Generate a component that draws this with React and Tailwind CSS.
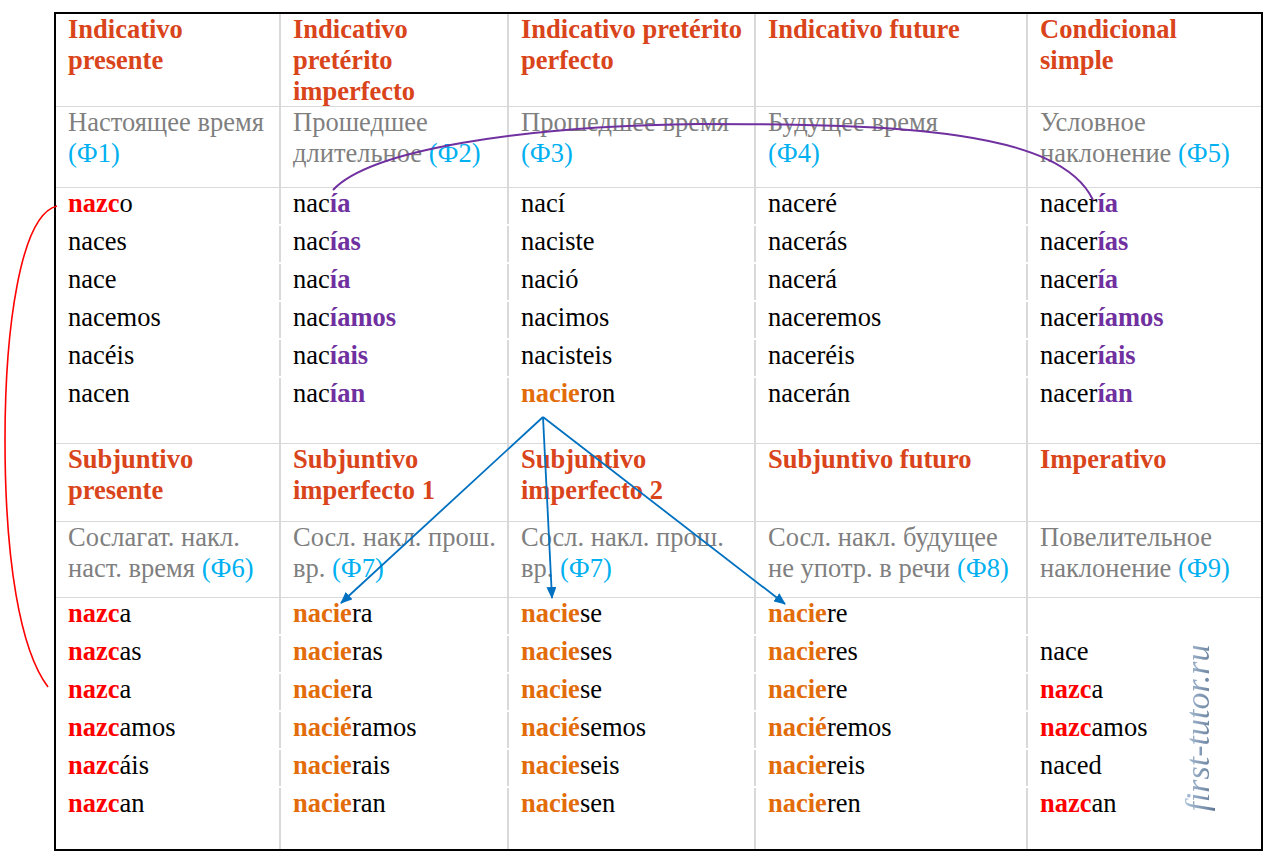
import React from 'react'

const R = ({ children }) => <b className="text-[#ff0000]">{children}</b>
const O = ({ children }) => <b className="text-[#e36c0a]">{children}</b>
const P = ({ children }) => <b className="text-[#7030a0]">{children}</b>
const F = ({ children }) => <span className="text-[#00b0f0]">{children}</span>

const cols = 'grid grid-cols-[223px_228px_247px_272px_235px]'
const line = 'border-[#d9d9d9]'

const Cell = ({ i, children }) => (
  <div className={`pl-[12px] whitespace-nowrap ${i > 0 ? `border-l-2 ${line}` : ''}`}>{children}</div>
)

const HeadRow = ({ items, h, top }) => (
  <div className={`${cols} ${h} ${top ? `border-t ${line}` : ''} font-bold text-[#d9441b]`}>
    {items.map((t, i) => <Cell key={i} i={i}>{t}</Cell>)}
  </div>
)

const SubRow = ({ items, h }) => (
  <div className={`${cols} ${h} border-t ${line} text-[#7f7f7f]`}>
    {items.map((t, i) => <Cell key={i} i={i}>{t}</Cell>)}
  </div>
)

const ConjRow = ({ data, h }) => (
  <div className={`${cols} ${h} border-t ${line}`}>
    {data.map((words, i) => (
      <div key={i} className="flex flex-col gap-[2px]">
        {words.map((w, j) => (
          <div
            key={j}
            className={`pl-[12px] whitespace-nowrap ${j === words.length - 1 ? 'flex-1' : 'h-[36px]'} ${i > 0 ? `border-l-2 ${line}` : ''}`}
          >
            {w}
          </div>
        ))}
      </div>
    ))}
  </div>
)

const conj1 = [
  [<><R>nazc</R>o</>, 'naces', 'nace', 'nacemos', 'nacéis', 'nacen'],
  [<>nac<P>ía</P></>, <>nac<P>ías</P></>, <>nac<P>ía</P></>, <>nac<P>íamos</P></>, <>nac<P>íais</P></>, <>nac<P>ían</P></>],
  ['nací', 'naciste', 'nació', 'nacimos', 'nacisteis', <><O>nacie</O>ron</>],
  ['naceré', 'nacerás', 'nacerá', 'naceremos', 'naceréis', 'nacerán'],
  [<>nacer<P>ía</P></>, <>nacer<P>ías</P></>, <>nacer<P>ía</P></>, <>nacer<P>íamos</P></>, <>nacer<P>íais</P></>, <>nacer<P>ían</P></>],
]

const conj2 = [
  [<><R>nazc</R>a</>, <><R>nazc</R>as</>, <><R>nazc</R>a</>, <><R>nazc</R>amos</>, <><R>nazc</R>áis</>, <><R>nazc</R>an</>],
  [<><O>nacie</O>ra</>, <><O>nacie</O>ras</>, <><O>nacie</O>ra</>, <><O>nacié</O>ramos</>, <><O>nacie</O>rais</>, <><O>nacie</O>ran</>],
  [<><O>nacie</O>se</>, <><O>nacie</O>ses</>, <><O>nacie</O>se</>, <><O>nacié</O>semos</>, <><O>nacie</O>seis</>, <><O>nacie</O>sen</>],
  [<><O>nacie</O>re</>, <><O>nacie</O>res</>, <><O>nacie</O>re</>, <><O>nacié</O>remos</>, <><O>nacie</O>reis</>, <><O>nacie</O>ren</>],
  ['', 'nace', <><R>nazc</R>a</>, <><R>nazc</R>amos</>, 'naced', <><R>nazc</R>an</>],
]

const Arrows = () => (
  <svg className="absolute inset-0 pointer-events-none" width="1273" height="863" viewBox="0 0 1273 863">
    <defs>
      <marker id="ah" markerWidth="12" markerHeight="10" refX="11" refY="5" orient="auto" markerUnits="userSpaceOnUse">
        <path d="M0,0 L12,5 L0,10 z" fill="#0070c0" />
      </marker>
    </defs>
    <path d="M333,190 C370,150 520,126 700,124 C900,124 1060,130 1093,200" fill="none" stroke="#7030a0" strokeWidth="2" />
    <path d="M57,206 C20,215 5,330 5,440 C5,560 20,650 48,687" fill="none" stroke="#ff0000" strokeWidth="1.6" />
    <g stroke="#0070c0" strokeWidth="1.8" fill="none">
      <line x1="543" y1="417" x2="341" y2="603" markerEnd="url(#ah)" />
      <line x1="543" y1="417" x2="552" y2="598" markerEnd="url(#ah)" />
      <line x1="543" y1="417" x2="785" y2="604" markerEnd="url(#ah)" />
    </g>
  </svg>
)

export default function App() {
  return (
    <div className="relative w-[1273px] h-[863px] bg-white pt-[12px] pl-[54px] font-['Liberation_Serif'] text-[26.5px] leading-[31px] text-black">
      <div className="w-[1209px] border-2 border-black">
        <HeadRow
          h="h-[92px]"
          items={[
            <>Indicativo<br />presente</>,
            <>Indicativo<br />pretérito<br />imperfecto</>,
            <>Indicativo pretérito<br />perfecto</>,
            'Indicativo future',
            <>Condicional<br />simple</>,
          ]}
        />
        <SubRow
          h="h-[81px]"
          items={[
            <>Настоящее время<br /><F>(Ф1)</F></>,
            <>Прошедшее<br />длительное <F>(Ф2)</F></>,
            <>Прошедшее время<br /><F>(Ф3)</F></>,
            <>Будущее время<br /><F>(Ф4)</F></>,
            <>Условное<br />наклонение <F>(Ф5)</F></>,
          ]}
        />
        <ConjRow h="h-[256px]" data={conj1} />
        <HeadRow
          h="h-[78px]"
          top
          items={[
            <>Subjuntivo<br />presente</>,
            <>Subjuntivo<br />imperfecto 1</>,
            <>Subjuntivo<br />imperfecto 2</>,
            'Subjuntivo futuro',
            'Imperativo',
          ]}
        />
        <SubRow
          h="h-[76px]"
          items={[
            <>Сослагат. накл.<br />наст. время <F>(Ф6)</F></>,
            <>Сосл. накл. прош.<br />вр. <F>(Ф7)</F></>,
            <>Сосл. накл. прош.<br />вр. <F>(Ф7)</F></>,
            <>Сосл. накл. будущее<br />не употр. в речи <F>(Ф8)</F></>,
            <>Повелительное<br />наклонение <F>(Ф9)</F></>,
          ]}
        />
        <ConjRow h="h-[252px]" data={conj2} />
      </div>
      <div className="absolute left-[1198px] top-[728px] -translate-x-1/2 -translate-y-1/2 -rotate-90 whitespace-nowrap italic text-[34px] leading-none bg-gradient-to-b from-[#b9cde3] to-[#5f7896] bg-clip-text text-transparent">
        first-tutor.ru
      </div>
      <Arrows />
    </div>
  )
}
